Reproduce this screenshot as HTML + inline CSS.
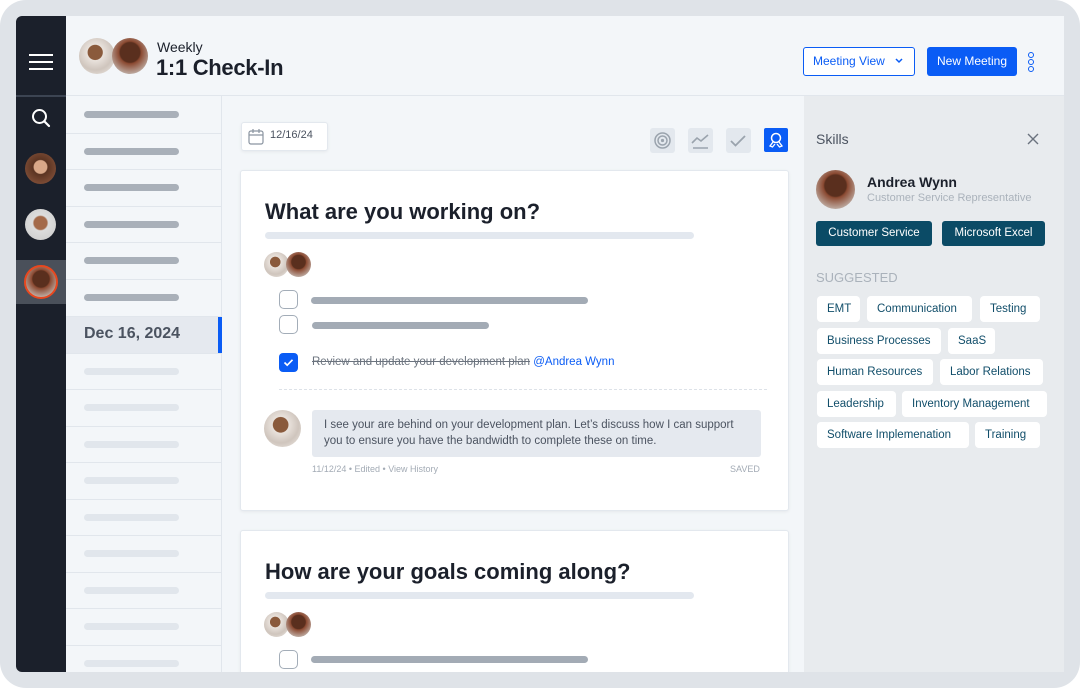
<!DOCTYPE html>
<html><head><meta charset="utf-8"><style>
*{margin:0;padding:0;box-sizing:border-box}
body{width:1080px;height:688px;background:#fff;font-family:"Liberation Sans",sans-serif;position:relative;overflow:hidden}
.abs{position:absolute}
.frame{left:0;top:0;width:1080px;height:688px;background:#dfe3e8;border-radius:26px}
.inner{left:16px;top:16px;width:1048px;height:656px;background:#f3f6f9;overflow:hidden;border-radius:6px 0 0 6px}
.bar{position:absolute;height:7px;border-radius:4px}
.av1{background:radial-gradient(circle at 45% 40%,#8a5a3c 0 25%,#e9e2dc 27%,#cfc5bd 60%,#f2eee9);}
.av2{background:radial-gradient(circle at 50% 40%,#5a2f1e 0 35%,#8b4a32 40%,#c2b4ac 80%);}
.av3{background:radial-gradient(circle at 50% 45%,#d9a889 0 28%,#5b3422 32%,#7a4a34 70%);}
.av4{background:radial-gradient(circle at 50% 45%,#a46a4a 0 28%,#ddd 34%,#c9c9c9);}
.circ{position:absolute;border-radius:50%}
.chip{position:absolute;height:26px;background:#fff;border-radius:4px;color:#114e6a;font-size:11.5px;line-height:26px;padding-left:10px;white-space:nowrap}
.cb{position:absolute;width:19px;height:19px;border:1.5px solid #a3adb8;border-radius:5px;background:#fff}
.card{position:absolute;background:#fff;border:1px solid #e3e8ee;border-radius:3px;box-shadow:0 1px 3px rgba(0,0,0,.06)}
.tb{position:absolute;top:112px;width:25px;height:25px;background:#e3e8ee;border-radius:3px}
</style></head><body>
<div class="abs frame"></div>
<div class="abs inner">
 <div class="abs" style="left:0;top:0;width:50px;height:656px;background:#1b202b"></div>
 <div class="abs" style="left:0;top:79px;width:50px;height:2px;background:#3c4452"></div>
 <div class="abs" style="left:13px;top:38px;width:24px;height:2px;background:#fff"></div>
 <div class="abs" style="left:13px;top:45px;width:24px;height:2px;background:#fff"></div>
 <div class="abs" style="left:13px;top:52px;width:24px;height:2px;background:#fff"></div>
 <svg class="abs" style="left:14px;top:91px" width="22" height="22" viewBox="0 0 22 22"><circle cx="9.5" cy="9.5" r="6.5" fill="none" stroke="#fff" stroke-width="2"/><path d="M14.5 14.5L19 19" stroke="#fff" stroke-width="2.2" stroke-linecap="round"/></svg>
 <div class="circ av3" style="left:9px;top:137px;width:31px;height:31px"></div>
 <div class="circ av4" style="left:9px;top:193px;width:31px;height:31px"></div>
 <div class="abs" style="left:0;top:244px;width:50px;height:44px;background:#4a505a"></div>
 <div class="circ av2" style="left:8px;top:249px;width:34px;height:34px;border:2px solid #e8481f"></div>
 <div class="abs" style="left:50px;top:79px;width:998px;height:1px;background:#e1e6ec"></div>
 <div class="circ av1" style="left:63px;top:22px;width:36px;height:36px"></div>
 <div class="circ av2" style="left:96px;top:22px;width:36px;height:36px"></div>
 <div class="abs" style="left:141px;top:23px;font-size:14px;color:#1b202b">Weekly</div>
 <div class="abs" style="left:140px;top:39px;font-size:22px;font-weight:bold;color:#1b202b;letter-spacing:-.3px">1:1 Check-In</div>
 <div class="abs" style="left:787px;top:31px;width:112px;height:29px;border:1.5px solid #0a5cf5;border-radius:3px;background:#fff;color:#0a5cf5;font-size:12px;line-height:26px;padding-left:9px">Meeting View<svg class="abs" style="left:91px;top:10px" width="8" height="6"><path d="M1 1l3 3 3-3" stroke="#0a5cf5" stroke-width="1.5" fill="none"/></svg></div>
 <div class="abs" style="left:911px;top:31px;width:90px;height:29px;border-radius:3px;background:#0a5cf5;color:#fff;font-size:12px;line-height:29px;text-align:center">New Meeting</div>
 <div class="circ" style="left:1012px;top:36px;width:6px;height:6px;border:1.5px solid #0a5cf5"></div>
 <div class="circ" style="left:1012px;top:43px;width:6px;height:6px;border:1.5px solid #0a5cf5"></div>
 <div class="circ" style="left:1012px;top:50px;width:6px;height:6px;border:1.5px solid #0a5cf5"></div>
 <div class="abs" style="left:50px;top:80px;width:156px;height:576px;background:#f3f6f9;border-right:1px solid #e1e6ec"></div>
 <div class="abs" style="left:50px;top:300px;width:156px;height:37px;background:#e5e9ef"></div>
 <div class="abs" style="left:202px;top:300px;width:4px;height:37px;background:#0a5cf5"></div>
 <div class="abs" style="left:68px;top:309px;font-size:16px;font-weight:bold;color:#4b5360">Dec 16, 2024</div>
 <div id="list"></div>
 <div class="card" style="left:225px;top:106px;width:87px;height:29px;border-radius:3px"></div>
 <svg class="abs" style="left:232px;top:112px" width="16" height="17" viewBox="0 0 16 17"><rect x="1" y="3" width="14" height="13" rx="2" fill="none" stroke="#8a94a0" stroke-width="1.2"/><path d="M1 7h14M5 1v4M11 1v4" stroke="#8a94a0" stroke-width="1.2"/></svg>
 <div class="abs" style="left:254px;top:113px;font-size:11px;color:#4b5360">12/16/24</div>
 <div class="tb" style="left:634px"></div><svg class="abs" style="left:637px;top:115px" width="19" height="19"><circle cx="9.5" cy="9.5" r="7.5" fill="none" stroke="#9aa3ad" stroke-width="1.5"/><circle cx="9.5" cy="9.5" r="4.5" fill="none" stroke="#9aa3ad" stroke-width="1.5"/><circle cx="9.5" cy="9.5" r="1.6" fill="#9aa3ad"/></svg>
 <div class="tb" style="left:672px"></div><svg class="abs" style="left:674px;top:115px" width="21" height="20"><path d="M2 12l5-5 4 3 7-6M3 17h15" stroke="#9aa3ad" stroke-width="1.6" fill="none"/></svg>
 <div class="tb" style="left:710px"></div><svg class="abs" style="left:712px;top:117px" width="21" height="16"><path d="M3 8l4.5 4.5L17 3" stroke="#9aa3ad" stroke-width="1.8" fill="none"/></svg>
 <div class="abs" style="left:748px;top:112px;width:24px;height:24px;background:#0a5cf5;border-radius:2px"></div>
 <svg class="abs" style="left:751px;top:115px" width="18" height="18"><circle cx="9" cy="7" r="4.5" fill="none" stroke="#fff" stroke-width="1.5"/><path d="M6 11l-3 4 2.5 1 2.5-3M12 11l3 4-2.5 1-2.5-3" stroke="#fff" stroke-width="1.3" fill="none"/></svg>
 <div class="card" style="left:224px;top:154px;width:549px;height:341px"></div>
 <div class="abs" style="left:249px;top:183px;font-size:22px;font-weight:bold;color:#1b202b">What are you working on?</div>
 <div class="bar" style="left:249px;top:216px;width:429px;background:#e3e8ef"></div>
 <div class="circ av1" style="left:248px;top:236px;width:25px;height:25px"></div>
 <div class="circ av2" style="left:270px;top:236px;width:25px;height:25px"></div>
 <div class="cb" style="left:263px;top:274px"></div><div class="bar" style="left:295px;top:281px;width:277px;background:#a3abb5"></div>
 <div class="cb" style="left:263px;top:299px"></div><div class="bar" style="left:296px;top:306px;width:177px;background:#a3abb5"></div>
 <div class="abs" style="left:263px;top:337px;width:19px;height:19px;background:#0a5cf5;border-radius:4px"></div>
 <svg class="abs" style="left:266px;top:340px" width="13" height="13"><path d="M2.5 6.5l2.7 2.7L10.5 3.8" stroke="#fff" stroke-width="1.7" fill="none"/></svg>
 <div class="abs" style="left:296px;top:340px;font-size:11.5px;color:#6b737e;white-space:nowrap"><s>Review and update your development plan</s> <span style="color:#0a5cf5">@Andrea Wynn</span></div>
 <div class="abs" style="left:263px;top:373px;width:488px;border-top:1px dashed #dde2e8"></div>
 <div class="circ av1" style="left:248px;top:394px;width:37px;height:37px"></div>
 <div class="abs" style="left:296px;top:394px;width:449px;height:47px;background:#e5e9ef;border-radius:3px;padding:8px 12px;font-size:11.5px;line-height:15.5px;color:#4b5360">I see your are behind on your development plan. Let’s discuss how I can support you to ensure you have the bandwidth to complete these on time.</div>
 <div class="abs" style="left:296px;top:448px;font-size:9px;color:#a3abb5">11/12/24 • Edited • View History</div>
 <div class="abs" style="left:714px;top:448px;font-size:9px;color:#a3abb5">SAVED</div>
 <div class="card" style="left:224px;top:514px;width:549px;height:160px"></div>
 <div class="abs" style="left:249px;top:543px;font-size:22px;font-weight:bold;color:#1b202b">How are your goals coming along?</div>
 <div class="bar" style="left:249px;top:576px;width:429px;background:#e3e8ef"></div>
 <div class="circ av1" style="left:248px;top:596px;width:25px;height:25px"></div>
 <div class="circ av2" style="left:270px;top:596px;width:25px;height:25px"></div>
 <div class="cb" style="left:263px;top:634px"></div><div class="bar" style="left:295px;top:640px;width:277px;background:#a3abb5"></div>
 <div class="abs" style="left:788px;top:80px;width:260px;height:576px;background:#e8ebee"></div>
 <div class="abs" style="left:800px;top:115px;font-size:14px;color:#4b5360">Skills</div>
 <svg class="abs" style="left:1011px;top:117px" width="12" height="12"><path d="M1 1l10 10M11 1L1 11" stroke="#6b737e" stroke-width="1.4"/></svg>
 <div class="circ av2" style="left:800px;top:154px;width:39px;height:39px"></div>
 <div class="abs" style="left:851px;top:158px;font-size:14px;font-weight:bold;color:#1b202b">Andrea Wynn</div>
 <div class="abs" style="left:851px;top:176px;font-size:11px;color:#aab2bb">Customer Service Representative</div>
 <div class="abs" style="left:800px;top:205px;width:116px;height:25px;background:#0b4b66;border-radius:3px;color:#fff;font-size:11.5px;line-height:25px;text-align:center">Customer Service</div>
 <div class="abs" style="left:926px;top:205px;width:103px;height:25px;background:#0b4b66;border-radius:3px;color:#fff;font-size:11.5px;line-height:25px;text-align:center">Microsoft Excel</div>
 <div class="abs" style="left:800px;top:254px;font-size:13px;color:#aab2bb">SUGGESTED</div>
 <div class="chip" style="left:801px;top:280px;width:43px">EMT</div>
 <div class="chip" style="left:851px;top:280px;width:105px">Communication</div>
 <div class="chip" style="left:964px;top:280px;width:60px">Testing</div>
 <div class="chip" style="left:801px;top:312px;width:124px">Business Processes</div>
 <div class="chip" style="left:932px;top:312px;width:47px">SaaS</div>
 <div class="chip" style="left:801px;top:343px;width:116px">Human Resources</div>
 <div class="chip" style="left:924px;top:343px;width:103px">Labor Relations</div>
 <div class="chip" style="left:801px;top:375px;width:79px">Leadership</div>
 <div class="chip" style="left:886px;top:375px;width:145px">Inventory Management</div>
 <div class="chip" style="left:801px;top:406px;width:152px">Software Implemenation</div>
 <div class="chip" style="left:959px;top:406px;width:65px">Training</div>
</div>
<script>
var h='',l=document.getElementById('list');
var ys=[80,117,153,190,226,263,300,337,373,410,446,483,519,556,592,629];
for(var i=0;i<ys.length;i++){var y=ys[i];
 if(i>0)h+='<div class="abs" style="left:50px;top:'+y+'px;width:156px;height:1px;background:#e1e6ec"></div>';
 if(i!=6)h+='<div class="bar" style="left:68px;top:'+(y+15)+'px;width:95px;background:'+(i<6?'#a9b0b9':'#e1e6ec')+'"></div>';}
l.innerHTML=h;
</script>
</body></html>
